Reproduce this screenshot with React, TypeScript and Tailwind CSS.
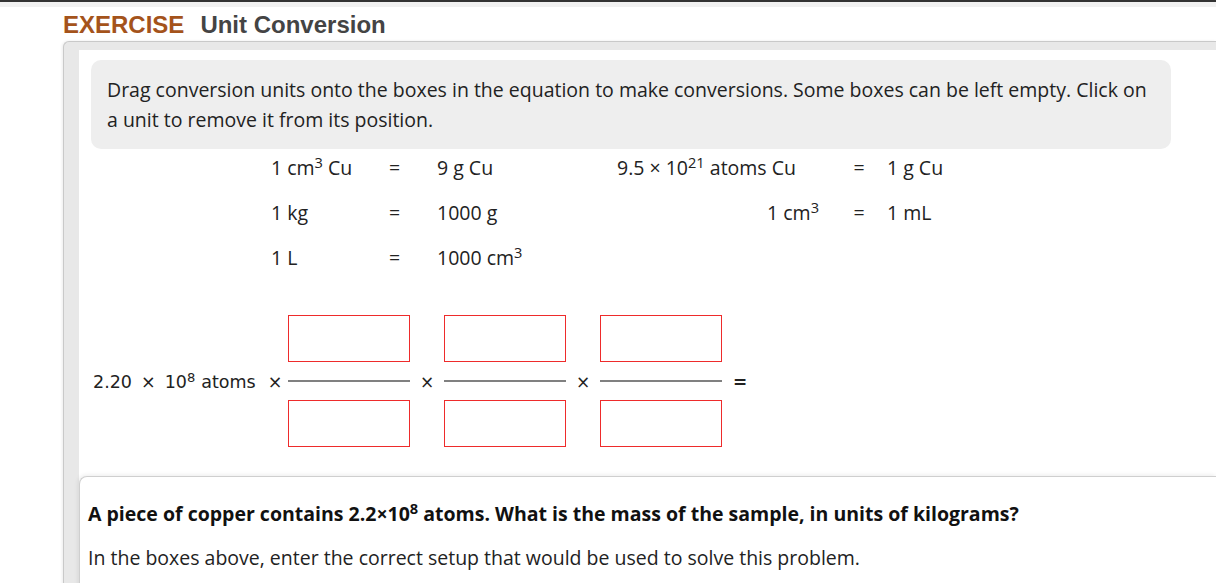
import React from 'react';

const openSans = { fontFamily: '"Open Sans", "Liberation Sans", sans-serif' };

function DropBox() {
  return <div className="h-[47px] w-[122px] border border-[#ee2b2b] bg-white" />;
}

function Fraction() {
  return (
    <div className="flex flex-col">
      <DropBox />
      <div className="mt-[18px] mb-[18px] h-[2px] w-[122px] bg-[#808080]" />
      <DropBox />
    </div>
  );
}

function Times() {
  return <div className="w-[34px] pt-[3px] text-center text-[17px] text-[#222]">×</div>;
}

export default function App() {
  return (
    <div className="h-[583px] w-full overflow-hidden bg-white text-[#222]" style={openSans}>
      {/* browser/top strip */}
      <div className="h-[2px] bg-[#333]" />
      <div className="h-[5px] bg-[#f1f1f1]" />
      <div className="h-[1px]" />

      {/* header */}
      <div className="flex h-[33px] items-start pl-[63px] font-['Liberation_Sans',Arial,sans-serif] text-[24px] font-bold leading-[33px]">
        <span className="text-[#a4531b]">EXERCISE</span>
        <span className="ml-[16px] text-[#444]">Unit Conversion</span>
      </div>

      {/* outer panel */}
      <div className="ml-[63px] flex h-[600px] rounded-tl-[6px] border-l border-t border-[#c9c9c9] bg-[#e8e8e8] pl-[15px] pt-[8px] shadow-[-1px_0_3px_rgba(0,0,0,0.08)]">
        <div className="flex-1 bg-white pl-[12px] pt-[10px]">
          <div className="w-[1080px] rounded-[10px] bg-[#eeeeee] px-[16px] pt-[15px] pb-[14px] text-[19.5px] leading-[30px] text-[#222]">
            Drag conversion units onto the boxes in the equation to make conversions. Some boxes can be left empty. Click on a unit to remove it from its position.
          </div>

          {/* conversion factors */}
          <div className="mt-[7px] ml-[180px] flex flex-col gap-[21px] text-[19.5px] leading-[24px]">
            <div className="flex">
              <div className="w-[104px] whitespace-nowrap">1 cm<sup>3</sup> Cu</div>
              <div className="w-[39px] text-center">=</div>
              <div className="w-[203px] pl-[23px]">9 g Cu</div>
              <div className="w-[221px] whitespace-nowrap">9.5 × 10<sup>21</sup> atoms Cu</div>
              <div className="w-[42px] text-center">=</div>
              <div className="pl-[7px]">1 g Cu</div>
            </div>
            <div className="flex">
              <div className="w-[104px]">1 kg</div>
              <div className="w-[39px] text-center">=</div>
              <div className="w-[203px] pl-[23px]">1000 g</div>
              <div className="w-[221px] pr-[19px] text-right">1 cm<sup>3</sup></div>
              <div className="w-[42px] text-center">=</div>
              <div className="pl-[7px]">1 mL</div>
            </div>
            <div className="flex">
              <div className="w-[104px]">1 L</div>
              <div className="w-[39px] text-center">=</div>
              <div className="w-[203px] pl-[23px]">1000 cm<sup>3</sup></div>
            </div>
          </div>

          {/* equation */}
          <div className="mt-[45px] flex items-center pl-[2px] font-['DejaVu_Sans',Verdana,sans-serif] text-[17.5px] text-[#222]">
            <div className="flex w-[195px] items-baseline whitespace-nowrap pt-[3px]">
              <span>2.20</span>
              <span className="mx-[9px]">×</span>
              <span>10<sup>8</sup></span>
              <span className="ml-[6px]">atoms</span>
              <span className="ml-[12px]">×</span>
            </div>
            <Fraction />
            <Times />
            <Fraction />
            <Times />
            <Fraction />
            <div className="ml-[11px] pt-[3px] text-[17px] font-bold">=</div>
          </div>

          {/* question */}
          <div className="mt-[29px] -ml-[12px] h-[200px] rounded-tl-[8px] border-l border-t border-[#cfcfcf] bg-white pl-[8px] pt-[22px] shadow-[-1px_-1px_4px_rgba(0,0,0,0.08)]">
            <div className="text-[19.5px] font-bold leading-[30px] text-[#111]">
              A piece of copper contains 2.2×10<sup>8</sup> atoms. What is the mass of the sample, in units of kilograms?
            </div>
            <div className="mt-[14px] text-[19.5px] leading-[30px] text-[#222]">
              In the boxes above, enter the correct setup that would be used to solve this problem.
            </div>
          </div>
        </div>
      </div>
    </div>
  );
}
